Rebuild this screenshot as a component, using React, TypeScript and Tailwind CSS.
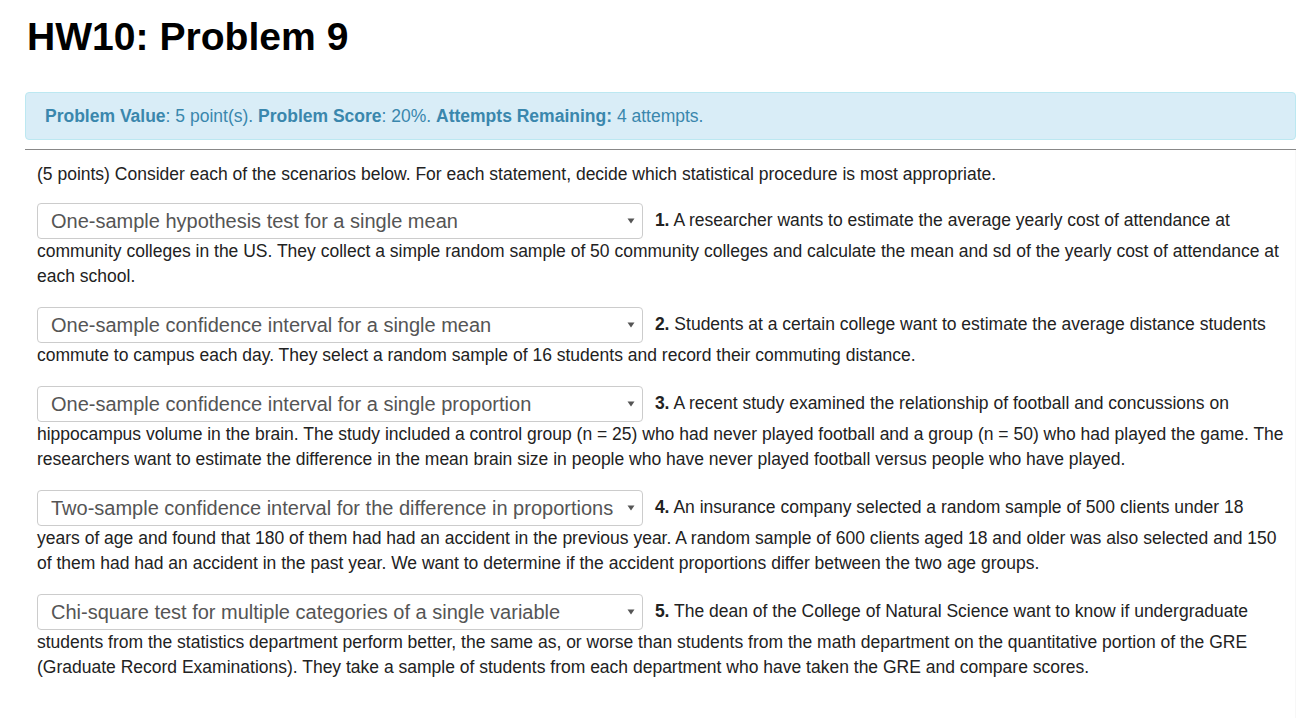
import React from "react"

type Item = {
  num: number
  answer: string
  text: string
}

const items: Item[] = [
  {
    num: 1,
    answer: "One-sample hypothesis test for a single mean",
    text: "A researcher wants to estimate the average yearly cost of attendance at community colleges in the US. They collect a simple random sample of 50 community colleges and calculate the mean and sd of the yearly cost of attendance at each school.",
  },
  {
    num: 2,
    answer: "One-sample confidence interval for a single mean",
    text: "Students at a certain college want to estimate the average distance students commute to campus each day. They select a random sample of 16 students and record their commuting distance.",
  },
  {
    num: 3,
    answer: "One-sample confidence interval for a single proportion",
    text: "A recent study examined the relationship of football and concussions on hippocampus volume in the brain. The study included a control group (n = 25) who had never played football and a group (n = 50) who had played the game. The researchers want to estimate the difference in the mean brain size in people who have never played football versus people who have played.",
  },
  {
    num: 4,
    answer: "Two-sample confidence interval for the difference in proportions",
    text: "An insurance company selected a random sample of 500 clients under 18 years of age and found that 180 of them had had an accident in the previous year. A random sample of 600 clients aged 18 and older was also selected and 150 of them had had an accident in the past year. We want to determine if the accident proportions differ between the two age groups.",
  },
  {
    num: 5,
    answer: "Chi-square test for multiple categories of a single variable",
    text: "The dean of the College of Natural Science want to know if undergraduate students from the statistics department perform better, the same as, or worse than students from the math department on the quantitative portion of the GRE (Graduate Record Examinations). They take a sample of students from each department who have taken the GRE and compare scores.",
  },
]

// Looks like a native select box
function FakeSelect({ value }: { value: string }) {
  return (
    <span className="inline-flex items-center align-middle w-[606px] h-[36px] border border-[#cccccc] rounded-[4px] bg-white pl-[13px] pr-[7px] mr-[7px]">
      <span className="flex-1 text-[20px] leading-[24px] text-[#555555] whitespace-nowrap overflow-hidden">{value}</span>
      <svg width="8" height="6" viewBox="0 0 8 6" className="shrink-0">
        <polygon points="0.5,0.5 7.5,0.5 4,5.5" fill="#555555" />
      </svg>
    </span>
  )
}

export default function App() {
  return (
    <div className="min-h-screen bg-white font-['Liberation_Sans',Arial,sans-serif] text-[#222222]">
      <div className="ml-[25px] w-[1271px]">
        <h1 className="pt-[15px] pl-[2px] text-[39.1px] leading-[44px] font-bold text-black">HW10: Problem 9</h1>

        <div className="mt-[33px] border border-[#bce8f1] bg-[#d9edf7] rounded-[4px] py-[12px] pl-[19px] text-[17.5px] leading-[22px] text-[#3a87ad]">
          <b>Problem Value</b>: 5 point(s). <b>Problem Score</b>: 20%. <b>Attempts Remaining:</b> 4 attempts.
        </div>

        <div className="mt-[9px] border-t border-[#888888]">
          <div className="pl-[12px] pr-[9px] pt-[12px] pb-[20px] border-r border-[#f7f7f7] text-[17.5px] leading-[25px]">
            <p className="mb-[16px]">
              (5 points) Consider each of the scenarios below. For each statement, decide which statistical procedure is most appropriate.
            </p>
            {items.map((item) => (
              <div key={item.num} className="mb-[18px]">
                <FakeSelect value={item.answer} /> <b>{item.num}.</b> {item.text}
              </div>
            ))}
          </div>
        </div>
      </div>
    </div>
  )
}
